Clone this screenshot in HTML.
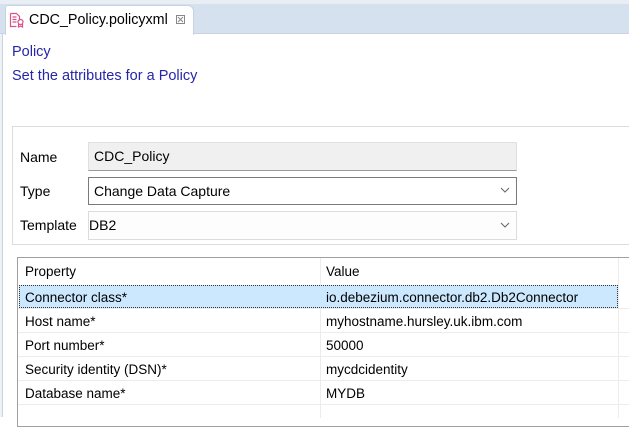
<!DOCTYPE html>
<html><head><style>
*{margin:0;padding:0;box-sizing:border-box}
body{width:629px;height:417px;overflow:hidden;background:#fff;font-family:"Liberation Sans",sans-serif;font-size:14px;color:#000;position:relative}
.a{position:absolute}
.t{white-space:nowrap;line-height:1}
.r{font-size:13.5px}
</style></head><body>
<div class="a" style="left:0;top:0;width:629px;height:34px;background:#d5e1ee"></div>
<div class="a" style="left:0;top:0;width:629px;height:4px;background:#e9eef5"></div>
<div class="a" style="left:0;top:33px;width:629px;height:1px;background:#c9d3df"></div>
<div class="a" style="left:5px;top:5px;width:189px;height:30px;background:#fff;border:1px solid #c9d3df;border-bottom:none;border-radius:3px 6px 0 0"></div>
<div class="a" style="left:0;top:34px;width:3px;height:383px;background:#eef1f6;border-right:1px solid #c9d3df"></div>
<svg class="a" style="left:9px;top:12px" width="16" height="16" viewBox="0 0 16 16" fill="none" stroke="#d9528a" stroke-width="1.2"><path d="M1.5 1.5h6l3 3v4M1.5 1.5v13h6"/><path d="M3.5 5h4M3.5 7.5h4M3.5 10h4"/><circle cx="11.5" cy="10" r="2.5"/><path d="M9.5 12v3l2-1 2 1v-3"/></svg>
<div class="a t" style="left:29px;top:13px;font-size:14.3px">CDC_Policy.policyxml</div>
<svg class="a" style="left:176px;top:15px" width="9" height="9" viewBox="0 0 9 9" fill="none" stroke="#888"><path d="M.5.5h8v8h-8z M2 2l5 5M7 2l-5 5"/></svg>
<div class="a t" style="left:12px;top:45px;color:#2626a8;font-size:14.5px">Policy</div>
<div class="a t" style="left:12px;top:69px;color:#2626a8;font-size:14.5px">Set the attributes for a Policy</div>
<div class="a" style="left:12px;top:126px;width:630px;height:119px;border:1px solid #dcdcdc"></div>
<div class="a t" style="left:20px;top:150px">Name</div>
<div class="a" style="left:88px;top:142px;width:429px;height:29px;background:#f0f0f0;border:1px solid #e0e0e0;border-bottom-color:#9a9a9a"></div>
<div class="a t" style="left:94px;top:149px">CDC_Policy</div>
<div class="a t" style="left:20px;top:184px">Type</div>
<div class="a" style="left:88px;top:177px;width:429px;height:28px;background:#fff;border:1px solid #7a7a7a"></div>
<div class="a t" style="left:94px;top:184px">Change Data Capture</div>
<div class="a t" style="left:20px;top:218px">Template</div>
<div class="a" style="left:88px;top:211px;width:429px;height:29px;background:#fdfdfd;border:1px solid #dcdcdc"></div>
<div class="a t" style="left:89px;top:218px">DB2</div>
<svg class="a" style="left:500px;top:186px" width="10" height="8"><path d="M1 2l4 4 4-4" stroke="#666" fill="none"/></svg>
<svg class="a" style="left:500px;top:221px" width="10" height="8"><path d="M1 2l4 4 4-4" stroke="#666" fill="none"/></svg>
<div class="a" style="left:17px;top:257px;width:620px;height:170px;border:1px solid #a0a0a0;border-right:none"></div>
<div class="a" style="left:320px;top:258px;width:1px;height:160px;background:#ececec"></div>
<div class="a" style="left:618px;top:258px;width:1px;height:160px;background:#ececec"></div>
<div class="a t r" style="left:25px;top:265px">Property</div>
<div class="a t r" style="left:326px;top:265px">Value</div>
<div class="a" style="left:19px;top:285px;width:599px;height:23px;background:#cce8ff;border:1px dotted #333"></div>
<div class="a" style="left:18px;top:332px;width:611px;height:1px;background:#ececec"></div>
<div class="a" style="left:18px;top:356px;width:611px;height:1px;background:#ececec"></div>
<div class="a" style="left:18px;top:380px;width:611px;height:1px;background:#ececec"></div>
<div class="a" style="left:18px;top:404px;width:611px;height:1px;background:#ececec"></div>
<div class="a" style="left:18px;top:308px;width:611px;height:1px;background:#ececec"></div>
<div class="a t r" style="left:25px;top:291px">Connector class*</div>
<div class="a t r" style="left:326px;top:291px">io.debezium.connector.db2.Db2Connector</div>
<div class="a t r" style="left:25px;top:315px">Host name*</div>
<div class="a t r" style="left:326px;top:315px">myhostname.hursley.uk.ibm.com</div>
<div class="a t r" style="left:25px;top:339px">Port number*</div>
<div class="a t r" style="left:326px;top:339px">50000</div>
<div class="a t r" style="left:25px;top:363px">Security identity (DSN)*</div>
<div class="a t r" style="left:326px;top:363px">mycdcidentity</div>
<div class="a t r" style="left:25px;top:387px">Database name*</div>
<div class="a t r" style="left:326px;top:387px">MYDB</div>
</body></html>
